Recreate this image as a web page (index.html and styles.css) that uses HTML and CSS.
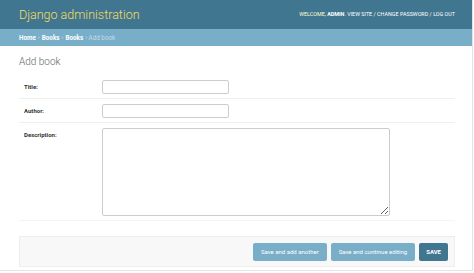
FILE: index.html
```html
<!DOCTYPE html>
<html lang="en">

<head>
    <meta charset="UTF-8">
    <title>Add book | Django site admin</title>
    <link rel="stylesheet" href="styles.css">
</head>

<body>
    <div class="frame">
        <div id="header">
            <div class="branding">Django administration</div>
            <div class="user-tools">
                Welcome, <strong>admin</strong>.
                <a href="#">View site</a> /
                <a href="#">Change password</a> /
                <a href="#">Log out</a>
            </div>
        </div>
        <div class="breadcrumbs">
            <a href="#">Home</a> &rsaquo; <a href="#">Books</a> &rsaquo; <a href="#">Books</a> &rsaquo; Add book
        </div>

        <div id="content">
            <h1>Add book</h1>
            <form>
                <fieldset class="module">
                    <div class="form-row">
                        <label for="id_title">Title:</label>
                        <input type="text" id="id_title" class="vTextField">
                    </div>
                    <div class="form-row">
                        <label for="id_author">Author:</label>
                        <input type="text" id="id_author" class="vTextField">
                    </div>
                    <div class="form-row">
                        <label for="id_description">Description:</label>
                        <textarea id="id_description"></textarea>
                    </div>
                </fieldset>
                <div class="submit-row">
                    <button type="button" class="btn">Save and add another</button>
                    <button type="button" class="btn">Save and continue editing</button>
                    <button type="button" class="btn default">SAVE</button>
                </div>
            </form>
        </div>
    </div>
</body>

</html>
```

FILE: styles.css
```css
body {
    margin: 0;
    font-family: Roboto, "Liberation Sans", sans-serif;
    color: #333;
    background: #fff;
}

.frame {
    width: 472px;
    height: 270px;
    border-right: 1px solid #e4e4e4;
    border-bottom: 1px solid #e4e4e4;
    overflow: hidden;
}

#header {
    height: 29px;
    background: #417690;
    display: flex;
    align-items: center;
    justify-content: space-between;
    padding: 0 17px 0 19px;
}

.branding {
    color: #f5dd5d;
    font-size: 12.5px;
    font-weight: 300;
}

.user-tools {
    color: #ffc;
    font-size: 5.4px;
    text-transform: uppercase;
    margin-top: -1px;
}

.user-tools strong {
    color: #fff;
    font-weight: 700;
}

.user-tools a {
    color: #fff;
    text-decoration: none;
}

.breadcrumbs {
    height: 17px;
    background: #79aec8;
    color: #c4dce8;
    font-size: 6.3px;
    padding: 0 19px;
    display: flex;
    align-items: center;
    gap: 2px;
}

.breadcrumbs a {
    color: #fff;
    font-weight: 700;
    text-decoration: none;
}

#content {
    padding: 10px 17px 0 19px;
}

h1 {
    margin: 0 0 8px;
    font-size: 10px;
    font-weight: 300;
    color: #666;
}

fieldset {
    margin: 0;
    padding: 0;
    border: none;
}

.form-row {
    display: flex;
    align-items: flex-start;
    padding: 5px 0 4px 5px;
    border-bottom: 1px solid #eee;
}

.form-row label {
    width: 78px;
    font-size: 6px;
    font-weight: 700;
    color: #333;
    padding-top: 3px;
}

.vTextField {
    box-sizing: border-box;
    width: 127px;
    height: 14px;
    margin: 0;
    border: 1px solid #ccc;
    border-radius: 2px;
    padding: 0 3px;
    font-size: 7px;
}

textarea {
    box-sizing: border-box;
    width: 288px;
    height: 88px;
    margin: 0;
    border: 1px solid #ccc;
    border-radius: 2px;
    font-size: 7px;
}

.form-row:last-child {
    border-bottom-color: #f4f4f4;
}

.submit-row {
    margin-top: 15px;
    height: 31px;
    box-sizing: border-box;
    background: #f8f8f8;
    border: 1px solid #eee;
    display: flex;
    align-items: center;
    justify-content: flex-end;
    gap: 4px;
    padding-right: 6px;
}

.btn {
    height: 18px;
    border: none;
    border-radius: 2px;
    background: #79aec8;
    color: #fff;
    font-family: Roboto, "Liberation Sans", sans-serif;
    font-size: 6px;
    padding: 0 8px;
}

.btn.default {
    background: #417690;
    font-weight: 700;
    padding: 0 7px;
}
```
